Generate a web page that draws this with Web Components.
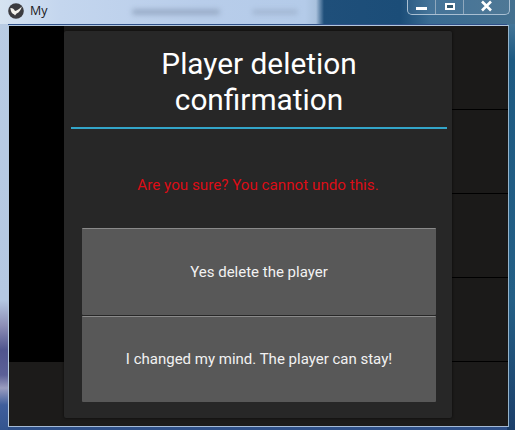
<!DOCTYPE html>
<html>
<head>
<meta charset="utf-8">
<title>My</title>
<style>
    html, body { margin: 0; padding: 0; height: 430px; overflow: hidden; background: #b9cfe9; }
</style>
</head>
<body>
<app-window title-text="My">
    <player-list></player-list>
    <confirm-dialog heading="Player deletion confirmation" message="Are you sure? You cannot undo this.">
        <dialog-button>Yes delete the player</dialog-button>
        <dialog-button>I changed my mind. The player can stay!</dialog-button>
    </confirm-dialog>
</app-window>

<script>
class AppWindow extends HTMLElement {
    connectedCallback() {
        this.attachShadow({mode: 'open'});
        this.shadowRoot.innerHTML = this.#makeStyleHTML() + this.#makeHTML();
    }

    #makeHTML() {
        return /*html*/`
            <div id="titlebar">
                <svg id="logo" width="18" height="18" viewBox="0 0 18 18">
                    <circle cx="9" cy="9" r="7.8" fill="#3c3c40"/>
                    <path d="M3.4 6 C5.2 5.8 7.2 7 8 9 C10 8.4 12.4 6.8 14.8 4.4 C14.2 7.6 12.2 10.4 9.6 11.4 L8 13.6 L7 12.2 C5 12 3.6 9 3.4 6 Z" fill="#f4f2ec"/>
                </svg>
                <span id="title">${this.getAttribute("title-text")}</span>
                <div id="smudges"><i></i><i></i></div>
                <div id="controls">
                    <div class="ctl" id="min"><b></b></div>
                    <div class="ctl" id="max"><b></b></div>
                    <div class="ctl" id="close">
                        <svg width="15" height="12" viewBox="0 0 15 12"><path d="M3 1.5 L12 10.5 M12 1.5 L3 10.5" stroke="#fff" stroke-width="2.6"/></svg>
                    </div>
                </div>
            </div>
            <div id="client"><slot></slot></div>
        `;
    }

    #makeStyleHTML() {
        return /*css*/`
            <style>
                :host {
                    display: flex;
                    flex-direction: column;
                    width: 515px;
                    height: 430px;
                    box-sizing: border-box;
                    padding: 0 6px 3px 8px;
                    overflow: hidden;
                    position: relative;
                    background:
                        linear-gradient(to bottom, #b9cce4 0, #b4c8e2 300px, #8e90b8 325px, #50558e 350px, #5c6098 375px, #9a9dc0 388px, #3f5e9c 405px, #34558f 430px) left / 8px 100% no-repeat,
                        linear-gradient(to bottom, #5d87a6 0, #1d5a82 60px, #235f86 300px, #1c3f6a 430px) right / 8px 100% no-repeat,
                        #2f5088;
                }

                #titlebar {
                    position: absolute;
                    left: 0;
                    top: 0;
                    width: 100%;
                    height: 24px;
                    display: flex;
                    align-items: center;
                    box-sizing: border-box;
                    padding-left: 7px;
                    background: linear-gradient(to right, #d6e3f1 0, #c4d6ee 60px, #b8cdea 200px, #b4cbe9 305px, #a9c1dd 316px, #1f4f7a 324px, #1b4d78 400px, #3a6c93 430px, #44708f 515px);
                }

                #logo { margin-top: -2px; }

                #title {
                    font: 12.5px "Open Sans", "Liberation Sans", sans-serif;
                    color: #1a1a22;
                    margin: -3px 0 0 5px;
                }

                #smudges i {
                    position: absolute;
                    top: 9px;
                    height: 6px;
                    background: #9aadc8;
                    filter: blur(2.5px);
                    border-radius: 3px;
                }
                #smudges i:nth-child(1) { left: 132px; width: 88px; }
                #smudges i:nth-child(2) { left: 252px; width: 46px; opacity: .6; }

                #controls {
                    position: absolute;
                    left: 407px;
                    top: 0;
                    width: 103px;
                    height: 15px;
                    display: flex;
                    box-sizing: border-box;
                    border: 1px solid #a9bfd2;
                    border-top: 0;
                    border-radius: 0 0 5px 5px;
                    background: rgba(255, 255, 255, .06);
                }

                .ctl {
                    display: flex;
                    align-items: center;
                    justify-content: center;
                    box-sizing: border-box;
                    border-right: 1px solid #8fa8bd;
                }
                #min { width: 28px; }
                #max { width: 28px; }
                #close { flex: 1; border-right: 0; }
                #min b { width: 11px; height: 3px; background: #fff; margin-top: 3px; }
                #max b { width: 6px; height: 3px; border: 2px solid #fff; margin-top: -2px; background: #33586f; }
                #close svg { margin-top: -2px; }

                #client {
                    position: relative;
                    flex: 1;
                    margin-top: 25px;
                    border: 1px solid #b4c8de;
                    border-right-color: #94b4cc;
                    border-bottom-color: #a4bad6;
                    background: #000;
                    display: flex;
                }
            </style>
        `;
    }
}

class PlayerList extends HTMLElement {
    connectedCallback() {
        this.attachShadow({mode: 'open'});
        this.shadowRoot.innerHTML = `
            <style>
                :host {
                    display: flex;
                    flex-direction: column;
                    width: 100%;
                    height: 100%;
                    background: #000;
                }
                .rows {
                    display: flex;
                    flex-direction: column;
                    padding-left: 55px;
                }
                .row {
                    height: 83px;
                    background: #1b1a19;
                    border-bottom: 1px solid #000;
                }
                .footer {
                    flex: 1;
                    background: #1c1b1a;
                }
            </style>
            <div class="rows">
                <div class="row"></div>
                <div class="row"></div>
                <div class="row"></div>
                <div class="row"></div>
            </div>
            <div class="footer"></div>
        `;
    }
}

class ConfirmDialog extends HTMLElement {
    connectedCallback() {
        this.attachShadow({mode: 'open'});
        this.shadowRoot.innerHTML = `
            <style>
                :host {
                    position: absolute;
                    left: 55px;
                    top: 5px;
                    width: 388px;
                    height: 387px;
                    box-sizing: border-box;
                    display: flex;
                    flex-direction: column;
                    padding: 0 5px 16px 7px;
                    background: #272727;
                    border-radius: 2px;
                    box-shadow: 0 0 3px rgba(0, 0, 0, .7);
                    font-family: Roboto, "Liberation Sans", sans-serif;
                }
                h1 {
                    margin: 0;
                    padding: 15px 30px 9px;
                    height: 72px;
                    font-weight: 400;
                    font-size: 29.8px;
                    line-height: 36px;
                    color: #fff;
                    text-align: center;
                }
                hr {
                    margin: 0;
                    height: 2px;
                    border: 0;
                    background: #33a5c9;
                }
                p {
                    margin: 0;
                    height: 99px;
                    box-sizing: border-box;
                    padding: 12px 2px 0 0;
                    display: flex;
                    align-items: center;
                    justify-content: center;
                    font-size: 15.2px;
                    color: #dc0d16;
                }
                .buttons {
                    display: flex;
                    flex-direction: column;
                    gap: 1px;
                    padding: 0 11px;
                    flex: 1;
                }
            </style>
            <h1>${this.getAttribute("heading")}</h1>
            <hr>
            <p>${this.getAttribute("message")}</p>
            <div class="buttons"><slot></slot></div>
        `;
    }
}

class DialogButton extends HTMLElement {
    connectedCallback() {
        this.attachShadow({mode: 'open'});
        this.shadowRoot.innerHTML = `
            <style>
                :host {
                    flex: 1;
                    display: flex;
                    align-items: center;
                    justify-content: center;
                    background: #585858;
                    border-top: 1px solid #8a8a8a;
                    border-radius: 1px;
                    font-family: Roboto, "Liberation Sans", sans-serif;
                    font-size: 15px;
                    color: #f2f2f2;
                }
            </style>
            <slot></slot>
        `;
    }
}

customElements.define('app-window', AppWindow);
customElements.define('player-list', PlayerList);
customElements.define('confirm-dialog', ConfirmDialog);
customElements.define('dialog-button', DialogButton);
</script>
</body>
</html>
